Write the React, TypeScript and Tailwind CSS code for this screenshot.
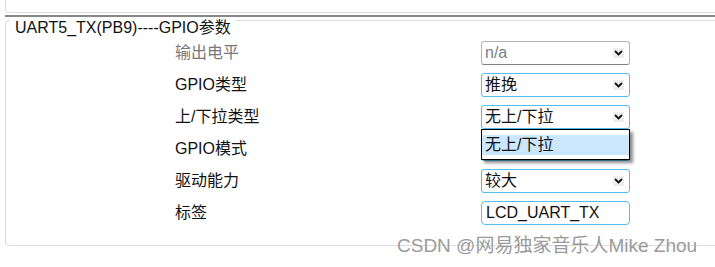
import React from "react";

function Chevron() {
  return (
    <span className="w-[11px] h-[10px] bg-[#eeeeee] flex items-center justify-center">
      <svg width="9" height="6" viewBox="0 0 9 6">
        <path d="M1 1 L4.5 4.5 L8 1" stroke="#111" strokeWidth="1.8" fill="none" />
      </svg>
    </span>
  );
}

function Select({ value, disabled, open }: { value: string; disabled?: boolean; open?: boolean }) {
  return (
    <div className="relative w-[149px] h-[24px]">
      <div
        className={
          disabled
            ? "h-full border border-[#b4b4b4] border-b-[#808080] rounded-[3px] flex items-center justify-between pl-[3px] pr-[5px]"
            : "h-full border border-[#50bff0] rounded-[3px] flex items-center justify-between pl-[3px] pr-[5px]"
        }
      >
        <span className={disabled ? "leading-[20px] text-[#7a8088]" : "leading-[20px] text-[#111]"}>{value}</span>
        <Chevron />
      </div>
      {open && (
        <div className="absolute left-0 top-[24px] z-10 w-[149px] h-[31px] border border-black bg-white pt-[5px] shadow-[3px_3px_3px_rgba(0,0,0,0.45)]">
          <div className="h-[20px] bg-[#cce8ff] pl-[3px] leading-[20px] text-[#111]">无上/下拉</div>
        </div>
      )}
    </div>
  );
}

function Row({ label, gray, children }: { label: string; gray?: boolean; children: React.ReactNode }) {
  return (
    <div className="flex items-center h-[24px]">
      <div className={gray ? "w-[306px] leading-[20px] text-[#777]" : "w-[306px] leading-[20px] text-[#111]"}>{label}</div>
      {children}
    </div>
  );
}

export default function App() {
  return (
    <div className="w-[715px] h-[267px] bg-white relative overflow-hidden text-[16px] text-black font-['Liberation_Sans','Noto_Sans_CJK_SC',sans-serif]">
      <div className="ml-[5px] -mr-[20px] h-[13px] border border-t-0 border-[#dcdcdc] rounded-b-[4px]" />
      <div className="mt-[2px] ml-[5px] h-[2px] bg-[#888888]" />
      <div className="mt-[3px] ml-[5px] -mr-[20px] h-[226px] border border-[#dcdcdc] rounded-[4px]">
        <div className="-mt-px ml-[4px] px-[5px] w-fit h-[16px] leading-[16px] bg-white text-[#111]">
          UART5_TX(PB9)----GPIO参数
        </div>
        <div className="mt-[5px] ml-[169px] flex flex-col gap-[8px]">
          <Row label="输出电平" gray>
            <Select value="n/a" disabled />
          </Row>
          <Row label="GPIO类型">
            <Select value="推挽" />
          </Row>
          <Row label="上/下拉类型">
            <Select value="无上/下拉" open />
          </Row>
          <Row label="GPIO模式">
            <Select value="" />
          </Row>
          <Row label="驱动能力">
            <Select value="较大" />
          </Row>
          <Row label="标签">
            <div className="w-[149px] h-[24px] border border-[#50bff0] rounded-[4px] flex items-center pl-[4px] leading-[20px] text-[#111]">
              LCD_UART_TX
            </div>
          </Row>
        </div>
      </div>
      <div className="absolute left-[397px] top-[235px] text-[19px] leading-[22px] text-[#9a9a9a] [text-shadow:0_0_1px_#fff]">
        CSDN @网易独家音乐人Mike Zhou
      </div>
    </div>
  );
}
